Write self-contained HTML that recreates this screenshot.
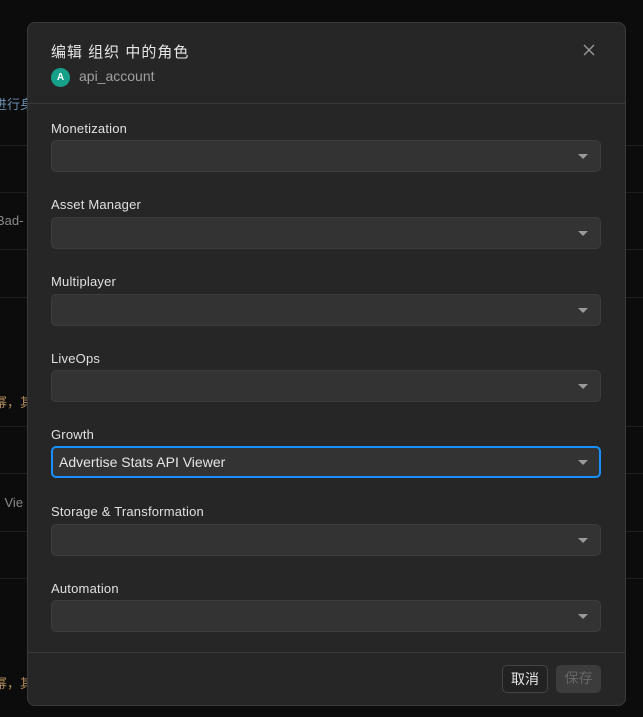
<!DOCTYPE html>
<html><head><meta charset="utf-8"><style>
*{box-sizing:border-box;margin:0;padding:0}
body{width:643px;height:717px;background:#0c0c0c;font-family:"Liberation Sans","Noto Sans CJK SC",sans-serif;position:relative;overflow:hidden}
.hl{position:absolute;height:1px;background:#1f1f1f;left:0;right:0}
.bgt{position:absolute;left:0;font-size:13px;color:#8a8a8a}
.modal{position:absolute;left:27px;top:22px;width:599px;height:684px;background:#262626;border:1px solid #3a3a3a;border-radius:8px}
.title{position:absolute;left:23px;top:18px;font-size:15px;color:#e6e6e6;letter-spacing:1px}
.av{position:absolute;left:23px;top:45px;width:19px;height:19px;border-radius:50%;background:#16a08a;color:#fff;font-size:10px;font-weight:bold;text-align:center;line-height:19px}
.acc{position:absolute;left:51px;top:45px;font-size:14px;color:#a0a0a0}
.x{position:absolute;left:555px;top:21px}
.div{position:absolute;left:0;right:0;height:1px;background:#3a3a3a}
.lab{position:absolute;left:23px;font-size:13px;color:#e0e0e0;letter-spacing:.2px}
.sel{position:absolute;left:23px;width:550px;height:32px;background:#333;border:1px solid #3c3c3c;border-radius:5px}
.sel:after{content:"";position:absolute;right:12px;top:13px;border-left:5px solid transparent;border-right:5px solid transparent;border-top:5px solid #9a9a9a}
.act{border:2px solid #1890ff;color:#e6e6e6;font-size:14px;padding:6px 0 0 6px}
.act:after{right:11px;top:12px}
.btn{position:absolute;top:642px;height:28px;border-radius:5px;font-size:14px;text-align:center;line-height:26px}
</style></head><body>
<div class="hl" style="top:145px"></div><div class="hl" style="top:192px"></div><div class="hl" style="top:249px"></div><div class="hl" style="top:297px"></div><div class="hl" style="top:426px"></div><div class="hl" style="top:473px"></div><div class="hl" style="top:531px"></div><div class="hl" style="top:578px"></div>
<div class="bgt" style="top:94px;left:-6px;color:#6b8fb0">进行身</div>
<div class="bgt" style="top:213px;left:-4px">Bad-</div>
<div class="bgt" style="top:392px;left:-6px;color:#b08a5a">幂，其</div>
<div class="bgt" style="top:495px;left:-2px">l Vie</div>
<div class="bgt" style="top:673px;left:-6px;color:#b08a5a">幂，其</div>
<div class="modal">
<div class="title">编辑 组织 中的角色</div>
<div class="av">A</div><div class="acc">api_account</div>
<svg class="x" width="12" height="12" viewBox="0 0 12 12"><path d="M1 1L11 11M11 1L1 11" stroke="#9a9a9a" stroke-width="1.3"/></svg>
<div class="div" style="top:80px"></div>
<div class="lab" style="top:98px">Monetization</div><div class="sel" style="top:117px"></div>
<div class="lab" style="top:174px">Asset Manager</div><div class="sel" style="top:194px"></div>
<div class="lab" style="top:251px">Multiplayer</div><div class="sel" style="top:271px"></div>
<div class="lab" style="top:328px">LiveOps</div><div class="sel" style="top:347px"></div>
<div class="lab" style="top:404px">Growth</div><div class="sel act" style="top:423px">Advertise Stats API Viewer</div>
<div class="lab" style="top:481px">Storage &amp; Transformation</div><div class="sel" style="top:501px"></div>
<div class="lab" style="top:558px">Automation</div><div class="sel" style="top:577px"></div>
<div class="div" style="top:629px"></div>
<div class="btn" style="left:474px;width:46px;border:1px solid #444;color:#e6e6e6;background:#222">取消</div>
<div class="btn" style="left:528px;width:45px;background:#3c3c3c;color:#666">保存</div>
</div>
</body></html>
